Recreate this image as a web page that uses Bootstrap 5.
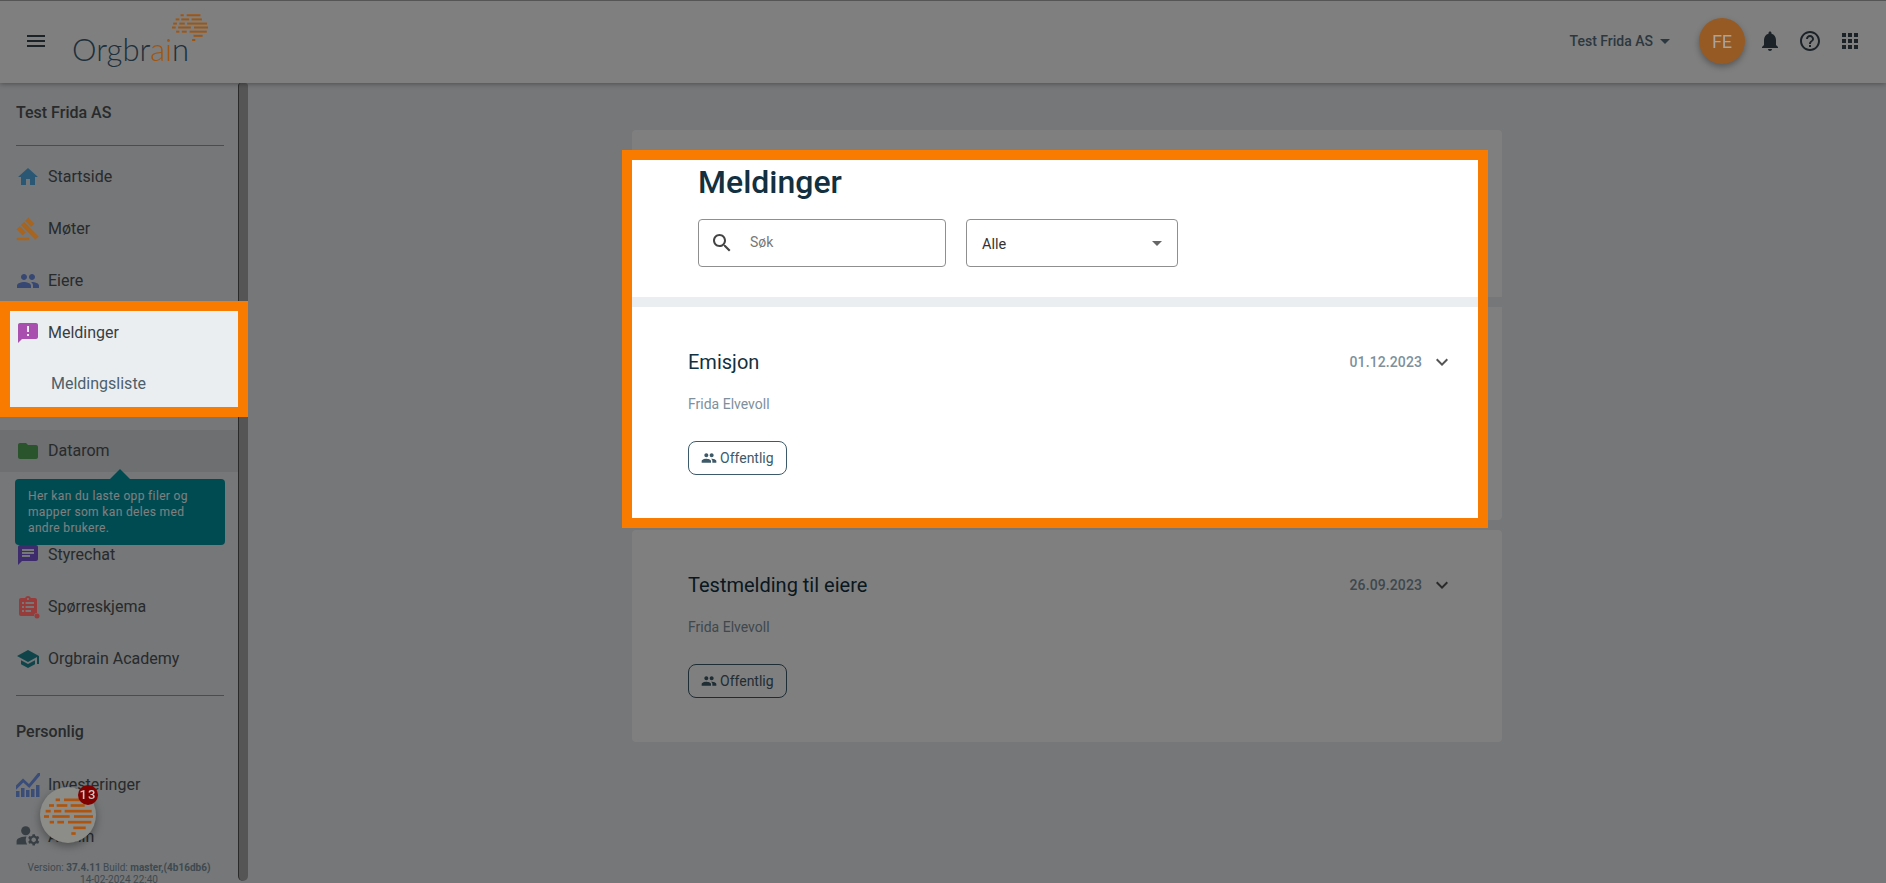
<!DOCTYPE html>
<html lang="no">
<head>
<meta charset="UTF-8">
<meta name="viewport" content="width=device-width, initial-scale=1.0">
<title>Orgbrain - Meldinger</title>
<link href="https://cdn.jsdelivr.net/npm/bootstrap@5.3.0/dist/css/bootstrap.min.css" rel="stylesheet">
<style>
html, body { height: 100%; overflow: hidden; }
body { font-family: Roboto, "Liberation Sans", sans-serif; background: #eaeef1; color: #12303f; }
svg { display: block; flex: none; fill: currentColor; }

.top-bar { position: relative; height: 83px; padding-bottom: 2px; background: #fff; border-top: 1px solid #aaa; box-shadow: 0 1px 5px rgba(0,0,0,.35); }
.brand-word { font-family: Lato, sans-serif; font-weight: 300; font-size: 31px; line-height: 1; color: #3c6078; margin: 16px 0 0 -1px; }
.brand-word span { position: relative; z-index: 30; color: #a05510; }
.brand-mark { position: relative; z-index: 30; color: #a05510; margin: -28px 0 0 -17px; }
.org-name { font-size: 14px; font-weight: 500; color: #587180; }
.org-caret { width: 0; height: 0; border: 5px solid transparent; border-top-color: #587180; border-bottom: 0; margin-left: 7px; }
.avatar { position: relative; z-index: 30; width: 46px; height: 46px; margin: 0 13px 0 29px; border-radius: 50%; background: #965b24; color: #a9a39b; font-size: 18px; box-shadow: 0 3px 6px rgba(0,0,0,.3); }
.top-icon { color: #384750; }

.side-panel { width: 248px; height: 800px; flex: none; overflow: hidden; }
.side-scroll { width: 238px; flex: none; padding-top: 18px; }
.scroll-thumb { width: 10px; flex: none; background: #aaa; border-left: 1px solid #555; border-radius: 3px 3px 5px 5px; margin-bottom: 2px; }
.side-title { font-size: 16px; font-weight: 500; line-height: 24px; color: #505458; padding-left: 16px; }
.side-rule { margin: 20px 14px 10px 16px; border-top: 1px solid #94989b; opacity: 1; }
.side-link { height: 42px; padding: 0 0 0 16px; gap: 8px; font-size: 16px; color: #505458; }
.side-link.sub-link { padding-left: 51px; color: #4d5f6a; }
.side-link.hovered { background: #dadee1; }
.side-open .side-link { color: #3a3d40; }
.side-open .side-link.sub-link { color: #4d5f6a; }
.side-blank { height: 42px; }
.raised { position: relative; z-index: 30; }
.gavel-icon { stroke: currentColor; stroke-width: .5; }
.version-line { font-size: 10px; line-height: 12px; color: #7e939f; text-align: center; margin-top: 4px; }

.guide-tip { position: absolute; left: 15px; top: 479px; width: 210px; height: 66px; padding: 9px 13px; background: #0096a4; color: #fff; border-radius: 4px; font-size: 12px; line-height: 16px; letter-spacing: .35px; }
.guide-tip::before { content: ""; position: absolute; left: 95px; top: -10px; width: 0; height: 0; border: 10px solid transparent; border-top: 0; border-bottom-color: #0096a4; }

.main-area { padding-top: 47px; }
.main-col { width: 870px; gap: 10px; }
.head-card { height: 167px; padding: 33px 66px 0; border: 0; border-radius: 4px 4px 0 0; }
.head-card h1 { font-size: 32px; font-weight: 500; line-height: 38px; color: #12303f; margin: 0 0 18px; }
.filter-row { column-gap: 20px; }
.search-box { width: 248px; height: 48px; border: 1px solid #8f8f8f; border-radius: 4px; padding-left: 11px; gap: 8px; color: #444; }
.search-box input { border: 0; padding: 0 0 2px 8px; font-size: 14px; box-shadow: none; background: transparent; }
.search-box input::placeholder { color: #777; }
.filter-select { width: 212px; height: 48px; border: 1px solid #8f8f8f; border-radius: 4px; font-size: 14.5px; color: #333; padding: 8px 36px 5px 15px;
  background-image: url("data:image/svg+xml,%3Csvg xmlns='http://www.w3.org/2000/svg' viewBox='0 0 10 5'%3E%3Cpath fill='%23666' d='M0 0h10L5 5z'/%3E%3C/svg%3E"); background-size: 10px 5px; background-position: right 15px center; }
.gap-strip { height: 10px; }
.msg-card { height: 213px; padding: 40px 48px 0 56px; border: 0; border-radius: 0 0 4px 4px; }
.msg-card.last-msg { height: 212px; border-radius: 4px; }
.msg-title { font-size: 20px; line-height: 30px; color: #12303f; }
.msg-date { font-size: 14px; font-weight: 500; letter-spacing: .1px; color: #7d909c; }
.msg-chevron { color: #555; }
.msg-author { font-size: 14px; line-height: 20px; color: #7d909c; margin: 17px 0 27px; }
.tag-btn { height: 34px; width: 99px; padding: 0 0 0 12px; gap: 3px; border: 1px solid #3c5a6a; border-radius: 8px; font-size: 14px; color: #3e5a68; }

.helper-bubble { position: absolute; left: 40px; top: 787px; width: 56px; height: 56px; z-index: 30; border-radius: 50%; background: #8c8c88; color: #ae540e; box-shadow: 0 3px 8px rgba(0,0,0,.35); }
.helper-count { position: absolute; left: 38px; top: -2px; width: 20px; height: 20px; border-radius: 50%; background: #800000; color: #c8c8c8; font-size: 13px; font-weight: 500; letter-spacing: 1px; line-height: 20px; text-align: center; }

.dim-layer { position: fixed; inset: 0; z-index: 20; background: rgba(0,0,0,.5);
  clip-path: path(evenodd, "M0 0H1886V883H0Z M632 160H1478V518H632Z M10 311H238V407H10Z"); }
.guide-frame { position: absolute; z-index: 25; border: 10px solid #f97c00; }
.frame-main { left: 622px; top: 150px; width: 866px; height: 378px; }
.frame-side { left: 0; top: 301px; width: 248px; height: 116px; }
</style>
</head>
<body>
<svg width="0" height="0" class="position-absolute">
  <symbol id="brain" viewBox="130 640 147 110">
    <rect x="165" y="641" width="13" height="8"/><rect x="190" y="641" width="56" height="8"/>
    <rect x="145" y="658" width="15" height="8"/><rect x="168" y="658" width="32" height="8"/><rect x="210" y="658" width="42" height="8"/>
    <rect x="135" y="675" width="15" height="8"/><rect x="160" y="675" width="22" height="8"/><rect x="192" y="675" width="81" height="8"/>
    <rect x="130" y="691" width="15" height="8"/><rect x="155" y="691" width="52" height="8"/><rect x="220" y="691" width="57" height="8"/>
    <rect x="147" y="708" width="13" height="8"/><rect x="170" y="708" width="20" height="8"/><rect x="202" y="708" width="70" height="8"/>
    <rect x="218" y="725" width="37" height="8"/><rect x="212" y="742" width="13" height="8"/>
  </symbol>
</svg>

<header class="top-bar d-flex align-items-center">
  <svg class="top-icon ms-4" width="24" height="24" viewBox="0 0 24 24"><path d="M3 18h18v-2H3v2zm0-5h18v-2H3v2zm0-7v2h18V6H3z"/></svg>
  <div class="brand-word ms-4">Orgbr<span>ai</span>n</div>
  <svg class="brand-mark" width="36" height="27"><use href="#brain"/></svg>
  <div class="d-flex align-items-center ms-auto">
    <span class="org-name">Test Frida AS</span>
    <span class="org-caret"></span>
    <div class="avatar d-flex align-items-center justify-content-center">FE</div>
    <div class="d-flex top-icon gap-3 me-4">
      <svg width="24" height="24" viewBox="0 0 24 24"><path d="M12 22c1.100 0 2-.9 2-2h-4c0 1.100.89 2 2 2zm6-6v-5c0-3.070-1.640-5.640-4.500-6.320V4c0-.83-.67-1.500-1.500-1.500s-1.500.67-1.500 1.500v.68C7.630 5.360 6 7.920 6 11v5l-2 2v1h16v-1l-2-2z"/></svg>
      <svg width="24" height="24" viewBox="0 0 24 24"><path d="M11 18h2v-2h-2v2zm1-16C6.480 2 2 6.480 2 12s4.480 10 10 10 10-4.480 10-10S17.520 2 12 2zm0 18c-4.410 0-8-3.590-8-8s3.590-8 8-8 8 3.590 8 8-3.590 8-8 8zm0-14c-2.210 0-4 1.790-4 4h2c0-1.100.9-2 2-2s2 .9 2 2c0 2-3 1.750-3 5h2c0-2.250 3-2.500 3-5 0-2.210-1.790-4-4-4z"/></svg>
      <svg width="24" height="24" viewBox="0 0 24 24"><path d="M4 8h4V4H4v4zm6 12h4v-4h-4v4zm-6 0h4v-4H4v4zm0-6h4v-4H4v4zm6 0h4v-4h-4v4zm6-10v4h4V4h-4zm-6 4h4V4h-4v4zm6 6h4v-4h-4v4zm0 6h4v-4h-4v4z"/></svg>
    </div>
  </div>
</header>

<div class="d-flex">
  <aside class="side-panel d-flex">
    <div class="side-scroll">
      <div class="side-title">Test Frida AS</div>
      <hr class="side-rule">
      <nav class="nav flex-column" style="gap:10px">
        <a class="nav-link side-link d-flex align-items-center" href="#"><svg width="24" height="24" viewBox="0 0 24 24" style="color:#54b0e8"><path d="M10 20v-6h4v6h5v-8h3L12 3 2 12h3v8z"/></svg>Startside</a>
        <a class="nav-link side-link d-flex align-items-center" href="#"><svg class="raised gavel-icon" width="24" height="24" viewBox="0 0 24 24" style="color:#a9641e"><path d="M1 21h12v2H1zM5.245 8.070l2.830-2.827 14.140 14.142-2.828 2.828zM12.317 1l5.657 5.656-2.830 2.830-5.654-5.660zM3.825 9.485l5.657 5.657-2.828 2.828-5.657-5.657z"/></svg>Møter</a>
        <a class="nav-link side-link d-flex align-items-center" href="#"><svg width="24" height="24" viewBox="0 0 24 24" style="color:#6c8ee8"><path d="M16 11c1.660 0 2.990-1.340 2.990-3S17.660 5 16 5c-1.660 0-3 1.340-3 3s1.340 3 3 3zm-8 0c1.660 0 2.990-1.340 2.990-3S9.660 5 8 5C6.340 5 5 6.340 5 8s1.340 3 3 3zm0 2c-2.330 0-7 1.170-7 3.500V19h14v-2.500c0-2.330-4.670-3.500-7-3.500zm8 0c-.29 0-.62.02-.97.05 1.160.84 1.970 1.970 1.970 3.450V19h6v-2.500c0-2.330-4.670-3.500-7-3.500z"/></svg>Eiere</a>
        <div class="side-open d-flex flex-column" style="gap:9px;margin-bottom:15px">
          <a class="nav-link side-link d-flex align-items-center" href="#"><svg width="24" height="24" viewBox="0 0 24 24" style="color:#a84fb0"><path d="M20 2H4c-1.100 0-1.990.9-1.990 2L2 22l4-4h14c1.100 0 2-.9 2-2V4c0-1.100-.9-2-2-2zm-7 9h-2V5h2v6zm0 4h-2v-2h2v2z"/></svg>Meldinger</a>
          <a class="nav-link side-link sub-link d-flex align-items-center" href="#">Meldingsliste</a>
        </div>
        <a class="nav-link side-link hovered d-flex align-items-center" href="#"><svg width="24" height="24" viewBox="0 0 24 24" style="color:#55a858"><path d="M10 4H4c-1.100 0-1.990.9-1.990 2L2 18c0 1.100.9 2 2 2h16c1.100 0 2-.9 2-2V8c0-1.100-.9-2-2-2h-8l-2-2z"/></svg>Datarom</a>
        <div class="side-blank"></div>
        <a class="nav-link side-link d-flex align-items-center" href="#"><svg width="24" height="24" viewBox="0 0 24 24" style="color:#7a56dc"><path d="M20 2H4c-1.100 0-1.990.9-1.990 2L2 22l4-4h14c1.100 0 2-.9 2-2V4c0-1.100-.9-2-2-2zM6 9h12v2H6V9zm8 5H6v-2h8v2zm4-6H6V6h12v2z"/></svg>Styrechat</a>
        <a class="nav-link side-link d-flex align-items-center" href="#"><svg class="raised" width="24" height="24" viewBox="0 0 24 24" style="color:#983c3b"><path d="M19 3h-4.180C14.400 1.840 13.300 1 12 1c-1.300 0-2.400.84-2.820 2H5c-1.100 0-2 .9-2 2v14c0 1.100.9 2 2 2h13a3 3 0 0 1 3-3V5c0-1.100-.9-2-2-2zm-7 0c.55 0 1 .45 1 1s-.45 1-1 1-1-.45-1-1 .45-1 1-1zM8 17H6v-2h2v2zm0-4H6v-2h2v2zm0-4H6V7h2v2zm7 8H9.500v-2H15v2zm3-4H9.500v-2H18v2zm0-4H9.500V7H18v2z"/><circle cx="21" cy="21" r="2.500"/></svg>Spørreskjema</a>
        <a class="nav-link side-link d-flex align-items-center" href="#"><svg width="24" height="24" viewBox="0 0 24 24" style="color:#1f8a95"><path d="M5 13.180v4L12 21l7-3.820v-4L12 17l-7-3.820zM12 3L1 9l11 6 9-4.910V17h2V9L12 3z"/></svg>Orgbrain Academy</a>
      </nav>
      <hr class="side-rule" style="margin-top:15px;margin-bottom:24px">
      <div class="side-title" style="margin-bottom:20px">Personlig</div>
      <nav class="nav flex-column" style="gap:10px">
        <a class="nav-link side-link d-flex align-items-center" href="#"><svg width="24" height="24" viewBox="0 0 24 24" style="color:#7498f0"><path d="M0 24v-6h3.500v6zM5 24v-9h3.500v9zM10 24v-7h3.500v7zM15 24v-8h3.500v8zM20 24v-12h3.500v12z"/><path d="M0 12.500l7-7 6 5.500 9-11h2v2.500l-10.700 12.500-6-5.500-7.300 7.200z"/></svg>Investeringer</a>
        <a class="nav-link side-link d-flex align-items-center" href="#"><svg width="24" height="24" viewBox="1.500 3 21 21" style="color:#6f7f8a"><circle cx="10" cy="8" r="4"/><path d="M10.670 13.020C10.450 13.010 10.230 13 10 13c-2.420 0-4.680.67-6.610 1.820C2.510 15.340 2 16.320 2 17.350V20h9.260c-.79-1.130-1.260-2.510-1.260-4 0-1.070.25-2.070.67-2.980z"/><path d="M20.750 16c0-.22-.03-.42-.06-.63l1.140-1.010-1-1.730-1.450.49c-.32-.27-.68-.48-1.080-.63L18 11h-2l-.3 1.490c-.4.15-.76.36-1.080.63l-1.450-.49-1 1.730 1.140 1.010c-.03.21-.06.41-.06.63s.03.42.06.63l-1.140 1.010 1 1.730 1.450-.49c.32.27.68.48 1.080.63L16 21h2l.3-1.490c.4-.15.76-.36 1.080-.63l1.450.49 1-1.730-1.140-1.010c.03-.21.06-.41.06-.63zM17 18c-1.100 0-2-.9-2-2s.9-2 2-2 2 .9 2 2-.9 2-2 2z"/></svg>Admin</a>
      </nav>
      <div class="version-line">Version: <b>37.4.11</b> Build: <b>master,(4b16db6)</b><br>14-02-2024 22:40</div>
    </div>
    <div class="scroll-thumb"></div>
  </aside>

  <main class="main-area flex-grow-1 d-flex justify-content-center">
    <div class="main-col d-flex flex-column">
      <div>
        <div class="card head-card">
          <h1>Meldinger</h1>
          <div class="d-flex filter-row">
            <label class="search-box d-flex align-items-center">
              <svg width="24" height="24" viewBox="0 0 24 24"><path d="M15.500 14h-.79l-.28-.27C15.410 12.590 16 11.110 16 9.500 16 5.910 13.090 3 9.500 3S3 5.910 3 9.500 5.910 16 9.500 16c1.610 0 3.090-.59 4.230-1.570l.27.28v.79l5 4.990L20.490 19l-4.990-5zm-6 0C7.010 14 5 11.990 5 9.500S7.010 5 9.500 5 14 7.010 14 9.500 11.990 14 9.500 14z"/></svg>
              <input class="form-control" type="text" placeholder="Søk">
            </label>
            <select class="form-select filter-select"><option>Alle</option></select>
          </div>
        </div>
        <div class="gap-strip"></div>
        <div class="card msg-card">
          <div class="d-flex align-items-center">
            <span class="msg-title">Emisjon</span>
            <span class="msg-date ms-auto me-2">01.12.2023</span>
            <svg class="msg-chevron" width="24" height="24" viewBox="0 0 24 24"><path d="M16.590 8.590L12 13.170 7.410 8.590 6 10l6 6 6-6z"/></svg>
          </div>
          <div class="msg-author">Frida Elvevoll</div>
          <button class="btn tag-btn d-flex align-items-center" type="button">
            <svg width="16" height="16" viewBox="0 0 24 24"><path d="M16 11c1.660 0 2.990-1.340 2.990-3S17.660 5 16 5c-1.660 0-3 1.340-3 3s1.340 3 3 3zm-8 0c1.660 0 2.990-1.340 2.990-3S9.660 5 8 5C6.340 5 5 6.340 5 8s1.340 3 3 3zm0 2c-2.330 0-7 1.170-7 3.500V19h14v-2.500c0-2.330-4.670-3.500-7-3.500zm8 0c-.29 0-.62.02-.97.05 1.160.84 1.970 1.970 1.970 3.450V19h6v-2.500c0-2.330-4.670-3.500-7-3.500z"/></svg>
            Offentlig
          </button>
        </div>
      </div>
      <div class="card msg-card last-msg">
        <div class="d-flex align-items-center">
          <span class="msg-title">Testmelding til eiere</span>
          <span class="msg-date ms-auto me-2">26.09.2023</span>
          <svg class="msg-chevron" width="24" height="24" viewBox="0 0 24 24"><path d="M16.590 8.590L12 13.170 7.410 8.590 6 10l6 6 6-6z"/></svg>
        </div>
        <div class="msg-author">Frida Elvevoll</div>
        <button class="btn tag-btn d-flex align-items-center" type="button">
          <svg width="16" height="16" viewBox="0 0 24 24"><path d="M16 11c1.660 0 2.990-1.340 2.990-3S17.660 5 16 5c-1.660 0-3 1.340-3 3s1.340 3 3 3zm-8 0c1.660 0 2.990-1.340 2.990-3S9.660 5 8 5C6.340 5 5 6.340 5 8s1.340 3 3 3zm0 2c-2.330 0-7 1.170-7 3.500V19h14v-2.500c0-2.330-4.670-3.500-7-3.500zm8 0c-.29 0-.62.02-.97.05 1.160.84 1.970 1.970 1.970 3.450V19h6v-2.500c0-2.330-4.670-3.500-7-3.500z"/></svg>
          Offentlig
        </button>
      </div>
    </div>
  </main>
</div>

<div class="guide-tip">Her kan du laste opp filer og mapper som kan deles med andre brukere.</div>

<div class="helper-bubble d-flex align-items-center justify-content-center">
  <svg width="49" height="37" style="margin-top:3px"><use href="#brain"/></svg>
  <span class="helper-count">13</span>
</div>

<div class="dim-layer"></div>
<div class="guide-frame frame-main"></div>
<div class="guide-frame frame-side"></div>

<script src="https://cdn.jsdelivr.net/npm/bootstrap@5.3.0/dist/js/bootstrap.bundle.min.js"></script>
</body>
</html>
